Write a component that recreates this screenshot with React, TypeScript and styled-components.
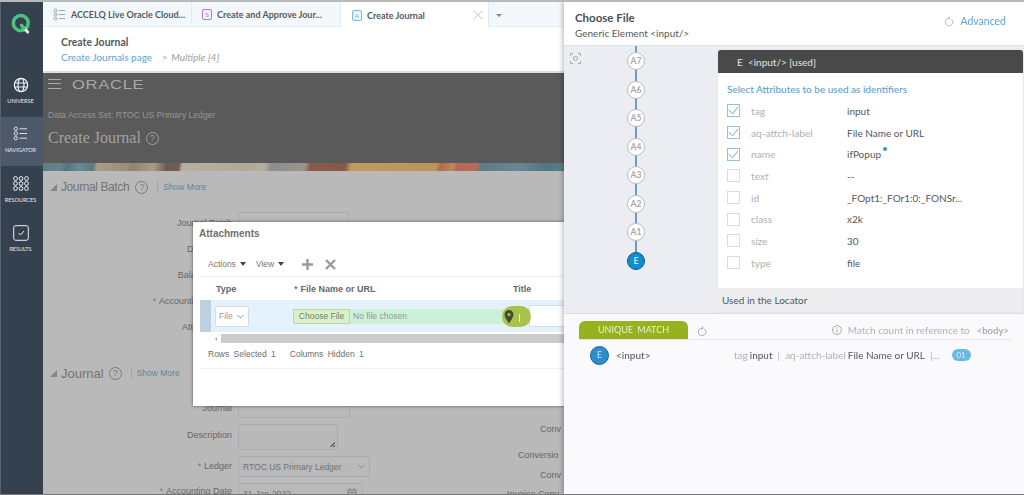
import React from "react";
import styled, { createGlobalStyle } from "styled-components";

const Global = createGlobalStyle`
  html, body { margin: 0; padding: 0; background: #fff; overflow: hidden; }
  * { box-sizing: border-box; }
  #root { width: 1024px; height: 495px; }
`;

const Shell = styled.div`
  width: 1024px; height: 495px; display: flex; overflow: hidden; position: relative;
  font-family: Lato, "Open Sans", sans-serif; border-top: 2px solid #b9b9b9; border-bottom: 1px solid #777;
  filter: blur(0.35px);
`;

/* Sidebar */
const Sidebar = styled.nav`
  width: 43px; flex: none; background: #364150; display: flex; flex-direction: column; border-left: 1px solid #59636f;
`;
const LogoSlot = styled.div`height: 71px; display: flex; justify-content: center; padding: 10px 2px 0 0;`;
const NavItem = styled.div<{ $active?: boolean; $h: number; $pad: number; $gap: number }>`
  height: ${p => p.$h}px; padding: ${p => p.$pad}px 3px 0 0; display: flex; flex-direction: column; align-items: center; gap: ${p => p.$gap}px;
  background: ${p => (p.$active ? "#4d5868" : "transparent")};
  color: #e9edf1; font-size: 5.5px; line-height: 7px; white-space: nowrap;
`;

/* Left main */
const Main = styled.div`flex: 1; min-width: 0; display: flex; flex-direction: column; position: relative; overflow: hidden;`;
const Tabs = styled.div`height: 25px; flex: none; display: flex; background: #f2f8fb; border-bottom: 1px solid #e6eef3;`;
const Tab = styled.div<{ $active?: boolean; $w: number }>`
  width: ${p => p.$w}px; height: ${p => (p.$active ? 26 : 25)}px; flex: none; display: flex; align-items: center; gap: 5px;
  padding: 0 5px 0 ${p => (p.$active ? 11 : 10)}px;
  background: ${p => (p.$active ? "#fff" : "transparent")}; color: #565a5f; font-size: 9px;
  border-right: 1px solid #e2ebf1; white-space: nowrap; position: relative;
`;
const TabLabel = styled.span`flex: 1; font-weight: 700;`;
const TabMenu = styled.div`width: 20px; display: flex; justify-content: center; padding-top: 12px; color: #888;`;
const Caret = styled.div`width: 0; height: 0; border-left: 3px solid transparent; border-right: 3px solid transparent; border-top: 3px solid #858a90;`;
const Head = styled.header`height: 46px; flex: none; background: #fff; padding: 9px 0 0 18px; border-bottom: 2px solid #d8e2ea;`;
const HeadTitle = styled.div`font-size: 10.5px; font-weight: 700; color: #54585c; line-height: 13px;`;
const Crumbs = styled.div`display: flex; align-items: center; font-size: 10px; line-height: 15px; margin-top: 1px; white-space: nowrap;`;
const CrumbLink = styled.span`color: #5ba3d5; width: 92px;`;
const CrumbSep = styled.span`color: #a5a9ad; font-size: 9px; margin-right: 4px; margin-left: 9px;`;
const CrumbMeta = styled.span`color: #9a9da2; font-style: italic; font-size: 10px;`;

/* Oracle */
const OracleTop = styled.section`
  height: 90px; flex: none; background: #5a5a5a; padding: 4px 0 0 5px; font-family: "Liberation Sans", sans-serif; color: #9a9a9a;
`;
const BrandRow = styled.div`display: flex; align-items: center; gap: 11px; height: 14px;`;
const Burger = styled.div`
  width: 13px; height: 10px; border-top: 1.5px solid #a9a9a9; border-bottom: 1.5px solid #a9a9a9; position: relative;
  &::after { content: ""; position: absolute; left: 0; right: 0; top: 2.8px; border-top: 1.5px solid #a9a9a9; }
`;
const Brand = styled.div`font-size: 13px; letter-spacing: .5px; color: #a8a8a8; transform: scaleX(1.28); transform-origin: left;`;
const AccessSet = styled.div`font-size: 8.6px; margin-top: 19px; color: #969696; line-height: 10px;`;
const PageTitle = styled.div`font-family: "Liberation Serif", serif; font-size: 16px; color: #a2a2a2; display: flex; align-items: center; gap: 5px; margin-top: 8px; line-height: 20px;`;
const Help = styled.span<{ $size: number; $c: string }>`
  width: ${p => p.$size}px; height: ${p => p.$size}px; border-radius: 50%; border: 1px solid ${p => p.$c}; color: ${p => p.$c};
  font: ${p => p.$size - 4}px/${p => p.$size - 2}px "Liberation Sans", sans-serif; text-align: center; flex: none;
`;
const Banner = styled.div`
  height: 8px; flex: none;
  background: linear-gradient(100deg,
    #5b7e88 0, #65848c 18px, #4f7480 24px, #6a8a92 36px, #587a84 50px,
    #ad9c84 54px, #9c8d78 84px, #8f8371 88px, #a89c86 110px, #6e5b55 122px, #6e5b55 134px,
    #b6b19f 138px, #aeaa98 205px, #b5b09e 218px, #8a8c8e 226px, #9a9688 258px,
    #8a5a48 264px, #85584a 298px, #c09a5e 304px, #bb9558 388px, #b5654a 392px, #bc8a58 404px,
    #b8675a 408px, #b66a5c 428px, #5a7c88 432px, #6a8790 470px, #507682 495px, #5e7f8a 521px);
`;
const Page = styled.section`
  flex: 1; background: #b9b9b9; padding: 7px 0 0 7px; font-family: "Liberation Sans", sans-serif; color: #6a6a6a;
`;
const SectionHead = styled.div<{ $mt?: number; $batch?: boolean }>`
  display: flex; align-items: center; height: 18px; margin-top: ${p => p.$mt ?? 0}px; white-space: nowrap; color: #747474;
  font-size: ${p => (p.$batch ? 12 : 13)}px; letter-spacing: ${p => (p.$batch ? -0.4 : 0)}px;
`;
const Disclosure = styled.div`width: 0; height: 0; border-left: 7px solid transparent; border-bottom: 7px solid #858585; margin-right: 4px;`;
const SectionHelp = styled.div<{ $ml: number; $mr: number }>`margin: 0 ${p => p.$mr}px 0 ${p => p.$ml}px; display: flex;`;
const ShowMore = styled.span`border-left: 1px solid #a4a4a4; padding-left: 5px; font-size: 8.5px; letter-spacing: 0; color: #5d8796; line-height: 12px;`;
const FormRow = styled.div<{ $h: number; $top?: boolean; $mt?: number }>`
  height: ${p => p.$h}px; margin-top: ${p => p.$mt ?? 0}px; display: grid; grid-template-columns: 182px 1fr; column-gap: 6px;
  align-items: ${p => (p.$top ? "start" : "center")}; font-size: 9px; line-height: 10px; color: #666;
`;
const Label = styled.div<{ $pt?: number }>`text-align: right; white-space: nowrap; padding-top: ${p => p.$pt ?? 0}px;`;
const Req = styled.span`color: #4f87ad; margin-right: 3px;`;
const Field = styled.div<{ $w: number; $h: number }>`
  width: ${p => p.$w}px; height: ${p => p.$h}px; border: 1px solid #a6acb0; border-radius: 2px; background: #b9b9b9;
  display: flex; align-items: center; justify-content: space-between; padding: 0 4px; color: #727272; font-size: 8.5px; white-space: nowrap; position: relative;
`;
const Grip = styled.div`position: absolute; right: 2px; bottom: 2px; width: 5px; height: 5px; background: linear-gradient(135deg, transparent 50%, #666 50%, #666 62%, transparent 62%, transparent 78%, #666 78%);`;
const JournalArea = styled.div`display: flex;`;
const JournalForm = styled.div`flex: 1;`;
const SideLabels = styled.div`
  width: 57px; flex: none; padding-top: 41px; font-size: 9px; line-height: 12px; color: #666; white-space: nowrap;
  display: grid; grid-template-rows: 26px 20px 19px 12px; justify-items: start;
`;
const SideLabel = styled.div<{ $off: number }>`padding-left: ${p => p.$off}px;`;

/* Dialog */
const Dialog = styled.div`
  position: absolute; left: 150px; top: 220px; width: 371px; height: 184px; background: #fff; box-shadow: 0 0 3px rgba(40,40,40,.7);
  font-family: "Liberation Sans", sans-serif; color: #6b6b6b; display: flex; flex-direction: column; padding-top: 6px;
`;
const DialogTitle = styled.div`font-size: 10px; font-weight: 700; color: #6f6f6f; padding-left: 6px; line-height: 12px;`;
const Tools = styled.div`display: flex; align-items: center; height: 20px; margin: 14px 0 2px 15px; font-size: 8.5px; color: #777; gap: 4px;`;
const ToolText = styled.span`line-height: 12px;`;
const DropCaret = styled.div<{ $mr: number }>`width: 0; height: 0; border-left: 3.5px solid transparent; border-right: 3.5px solid transparent; border-top: 4px solid #444; margin-right: ${p => p.$mr}px;`;
const ToolIcons = styled.div`display: flex; gap: 12px; align-items: center; margin-left: 14px;`;
const ColHead = styled.div`
  height: 24px; margin-left: 7px; border-top: 1px solid #eef0f2; display: grid; grid-template-columns: 16px 78px 219px 1fr; align-items: center;
  font-size: 9px; font-weight: 700; color: #666; white-space: nowrap;
`;
const ColReq = styled.span`color: #4f87ad; margin-right: 3px;`;
const DataRow = styled.div`height: 32px; margin-left: 7px; background: #e6f2fb; display: flex; align-items: center; position: relative;`;
const RowMark = styled.div`width: 11px; align-self: stretch; background: #bdd0de;`;
const TypeSelect = styled.div`
  margin-left: 4px; width: 34px; height: 21px; background: #fff; border: 1px solid #cfdfe9; border-radius: 2px; display: flex; align-items: center; gap: 4px; padding-left: 3px; font-size: 8.5px; color: #999;
`;
const FileInput = styled.div`
  margin-left: 44px; width: 212px; height: 15px; background: #cdf1d8; display: flex; align-items: center; font-size: 8.5px; color: #8b9c90; gap: 3px; white-space: nowrap;
`;
const FileButton = styled.div`
  width: 57px; height: 15px; background: #dcf0c8; border: 1px solid #b7d8a8; border-radius: 1px; text-align: center; line-height: 13px; color: #6e7f6c; flex: none;
`;
const PinBadge = styled.div`
  position: absolute; left: 302px; top: 6px; width: 29px; height: 21px; border-radius: 11px; background: #a9c24b; display: flex; align-items: center; padding-left: 2px; gap: 5px;
`;
const Cursor = styled.div`width: 1px; height: 8px; background: #f0f4dc; margin-top: 2px;`;
const TitleCell = styled.div`position: absolute; left: 329px; right: 0; top: 5px; height: 22px; background: #fff; border: 1px solid #cfdfe9; border-right: 0;`;
const ScrollRow = styled.div`height: 9px; margin: 2px 0 0 7px; display: flex; align-items: center; gap: 4px; padding-left: 15px;`;
const ScrollArrow = styled.div`width: 0; height: 0; border-top: 2px solid transparent; border-bottom: 2px solid transparent; border-right: 2px solid #aaa;`;
const ScrollThumb = styled.div`flex: 1; height: 9px; background: #cbcbcb;`;
const DialogFoot = styled.div`
  height: 26px; margin-left: 7px; padding: 0 0 4px 8px; border-bottom: 1px solid #f1f1f1; display: flex; align-items: center; gap: 14px; font-size: 8.5px; color: #6e6e6e; white-space: nowrap;
`;
const FootStat = styled.span`word-spacing: 2px;`;

/* Right panel */
const Panel = styled.aside`
  width: 460px; flex: none; display: flex; flex-direction: column; background: #fafafc; box-shadow: -2px 0 4px rgba(0,0,0,.22); position: relative; z-index: 2;
`;
const PanelHead = styled.header`
  height: 43px; flex: none; background: #fff; padding: 8px 18px 0 11px; display: flex; justify-content: space-between;
`;
const PanelTitle = styled.div`font-size: 11.5px; font-weight: 700; color: #4d5156; line-height: 15px;`;
const PanelSub = styled.div`font-size: 10px; color: #55595e; line-height: 13px; margin-top: 2px;`;
const Advanced = styled.div`display: flex; align-items: center; gap: 6px; color: #5ba3d5; font-size: 10.5px; height: 22px;`;
const Workspace = styled.div`
  height: 269px; flex: none; background: #ecedf3; border-top: 1px solid #e4e5ea; border-bottom: 1px solid #dcdde2; display: flex; position: relative;
`;
const ShotIcon = styled.div`position: absolute; left: 6px; top: 7px; display: flex;`;
const Timeline = styled.div`
  width: 154px; flex: none; display: flex; flex-direction: column; align-items: center; padding: 6px 0 0 0; position: relative;
  &::before { content: ""; position: absolute; left: 71px; top: 0; width: 2px; height: 212px; background: #6a9cc4; }
`;
const Node = styled.div<{ $end?: boolean }>`
  width: 18px; height: 18px; border-radius: 50%; position: relative; margin: 0 10px 10.55px 0; flex: none;
  background: ${p => (p.$end ? "#0e8fd0" : "#fff")}; border: 1px solid ${p => (p.$end ? "#11598e" : "#bcbcbc")};
  color: ${p => (p.$end ? "#cfeaf8" : "#a8a8a8")}; font-size: 8.5px; line-height: 16px; text-align: center; font-weight: 700;
`;
const Card = styled.div`
  width: 305px; height: 262px; margin-top: 4px; background: #fff; border-radius: 3px 3px 0 0; display: flex; flex-direction: column; box-shadow: 0 0 1px rgba(0,0,0,.25);
`;
const CardHead = styled.div`height: 23px; flex: none; background: #494949; color: #e4e4e4; font-size: 10px; display: flex; align-items: center; padding-left: 19px; border-radius: 3px 3px 0 0; white-space: nowrap;`;
const CardBody = styled.div`flex: 1; padding: 9px 0 0 9px;`;
const AttrTitle = styled.div`color: #5ba3d5; font-size: 10px; font-weight: 500; line-height: 14px; margin-bottom: 4px;`;
const AttrRow = styled.div`height: 21.7px; display: grid; grid-template-columns: 24px 96px 1fr; align-items: center; font-size: 10px; white-space: nowrap;`;
const Check = styled.div<{ $on?: boolean }>`
  width: 13px; height: 13px; border: 1px solid ${p => (p.$on ? "#8cc3e8" : "#dcdcdc")}; background: #fff; display: flex; align-items: center; justify-content: center;
`;
const AttrName = styled.div`color: #b0b0b0; font-size: 10.2px;`;
const AttrVal = styled.div`color: #55585c; display: flex; line-height: 12px;`;
const Dot = styled.span`width: 4px; height: 4px; border-radius: 50%; background: #2a9ad8; margin: -1px 0 0 2px; flex: none;`;
const CardFoot = styled.div`height: 24px; flex: none; background: #ededf0; color: #55585c; font-size: 10px; display: flex; align-items: center; padding: 0 0 1px 4px;`;
const Results = styled.div`flex: 1; padding: 7px 13px 0 15px;`;
const ResultTabs = styled.div`display: flex; align-items: flex-end; height: 19px; border-bottom: 1px solid #e6e6ea; font-size: 10px; color: #b5b5b8;`;
const Unique = styled.div`
  width: 109px; height: 18px; background: #95b31e; color: #eaf2cf; border-radius: 6px 6px 0 0; font-size: 9px; text-align: center; line-height: 18px; word-spacing: 2px; flex: none;
`;
const Refresh = styled.div`margin: 0 0 2px 9px; display: flex;`;
const MatchInfo = styled.div`margin-left: auto; display: flex; align-items: center; gap: 3px; height: 18px; font-size: 10px; color: #b2b2b6; white-space: nowrap; padding-right: 2px;`;
const BodyTag = styled.span`margin-left: 4px; font-weight: 700; font-size: 9.5px; color: #adadb1;`;
const ResultRow = styled.div`display: flex; align-items: center; height: 30px; padding-left: 11px; font-size: 10px; white-space: nowrap;`;
const ResultNode = styled.div`
  width: 19px; height: 19px; border-radius: 50%; background: #2a8fd0; border: 1px solid #1c5e92; color: #cfe8f8; font-size: 8.5px; text-align: center; line-height: 17px; flex: none;
`;
const ResultTag = styled.div`margin-left: 7px; width: 118px; color: #5b5e62; font-weight: 500;`;
const Muted = styled.span`color: #b2b2b6;`;
const Strong = styled.span`color: #55585c; margin: 0 5px 0 2px;`;
const Count = styled.div`margin-left: 12px; width: 19px; height: 12px; border-radius: 6px; background: #6cb9e8; color: #d8effb; font-size: 8px; text-align: center; line-height: 12px;`;

const Globe = () => (
  <svg width="16" height="16" viewBox="0 0 24 24" fill="none" stroke="#eef1f4" strokeWidth="1.8">
    <circle cx="12" cy="12" r="10" /><ellipse cx="12" cy="12" rx="4.5" ry="10" /><path d="M2.5 9h19M2.5 15h19" />
  </svg>
);
const ListIcon = ({ size = 15, c = "#e7ebef" }: { size?: number; c?: string }) => (
  <svg width={size} height={size} viewBox="0 0 16 16" fill="none" stroke={c} strokeWidth="1" style={{ flex: "none" }}>
    <circle cx="3" cy="3" r="1.8" /><circle cx="3" cy="8" r="1.8" /><circle cx="3" cy="13" r="1.8" />
    <path d="M7 3h8M7 8h8M7 13h8" />
  </svg>
);
const Grid9 = () => (
  <svg width="16" height="15" viewBox="0 0 16 15" fill="none" stroke="#eef1f4" strokeWidth="1">
    {[2.5, 8, 13.5].flatMap(x => [2.5, 7.5, 12.5].map(y => <circle key={x + "-" + y} cx={x} cy={y} r="1.9" />))}
  </svg>
);
const Logo = () => (
  <svg width="22" height="22" viewBox="0 0 21 23" fill="none">
    <path d="M17 15.5A7.8 7.8 0 1 1 18 10.5c0 1.8-.4 3.4-1 5" stroke="#4cc07f" strokeWidth="3.6" strokeLinecap="round" />
    <path d="M11 14l6.5 7" stroke="#e8edf0" strokeWidth="3" strokeLinecap="round" />
    <path d="M11 14l3 3.2" stroke="#4cc07f" strokeWidth="3" strokeLinecap="round" />
  </svg>
);
const LetterBox = ({ t, c, bg }: { t: string; c: string; bg: string }) => (
  <svg width="10" height="11" viewBox="0 0 10 11" style={{ flex: "none" }}>
    <rect x=".5" y=".5" width="9" height="10" rx="1.5" fill={bg} stroke={c} />
    <text x="5" y="8.2" fontSize="6.5" fontFamily="Lato, sans-serif" textAnchor="middle" fill={c}>{t}</text>
  </svg>
);
const Tick = () => (
  <svg width="11" height="9" viewBox="0 0 11 9" fill="none" stroke="#69b2e4" strokeWidth="1"><path d="M1 4l3.5 4L10 .8" /></svg>
);
const Pin = () => (
  <svg width="10" height="14" viewBox="0 0 10 14">
    <path fillRule="evenodd" d="M5 0a4.4 4.4 0 0 1 4.4 4.5C9.4 7.6 6 11.5 5 13.5 4 11.5.6 7.6.6 4.5A4.4 4.4 0 0 1 5 0zm0 3a1.6 1.6 0 1 0 0 3.2A1.6 1.6 0 0 0 5 3z" fill="#3f4a35" />
  </svg>
);
const Chevron = ({ c = "#7f8b92", w = 7 }: { c?: string; w?: number }) => (
  <svg width={w} height="5" viewBox="0 0 7 5" fill="none" stroke={c} strokeWidth="1"><path d="M.5 1l3 3 3-3" /></svg>
);
const RefreshIcon = ({ c = "#a9a9ad" }: { c?: string }) => (
  <svg width="10" height="11" viewBox="0 0 10 11" fill="none" stroke={c} strokeWidth="1"><path d="M7.5 3a3.8 3.8 0 1 1-2.2-.8M5 .4l1 1.8-1.6 1" /></svg>
);

const nodes = ["A7", "A6", "A5", "A4", "A3", "A2", "A1"];
const attrs: { n: string; v: string; on?: boolean; dot?: boolean }[] = [
  { n: "tag", v: "input", on: true },
  { n: "aq-attch-label", v: "File Name or URL", on: true },
  { n: "name", v: "ifPopup", on: true, dot: true },
  { n: "text", v: "--" },
  { n: "id", v: "_FOpt1:_FOr1:0:_FONSr..." },
  { n: "class", v: "x2k" },
  { n: "size", v: "30" },
  { n: "type", v: "file" },
];

export default function App() {
  return (
    <Shell>
      <Global />
      <Sidebar>
        <LogoSlot><Logo /></LogoSlot>
        <NavItem $h={44} $pad={4} $gap={5}><Globe />UNIVERSE</NavItem>
        <NavItem $active $h={49} $pad={9} $gap={6}><ListIcon />NAVIGATOR</NavItem>
        <NavItem $h={49} $pad={10} $gap={6}><Grid9 />RESOURCES</NavItem>
        <NavItem $h={50} $pad={10} $gap={5}>
          <svg width="16" height="16" viewBox="0 0 16 16" fill="none" stroke="#eef1f4"><rect x=".7" y=".7" width="14.6" height="14.6" rx="2" /><path d="M5.5 8l2 2 3.5-4" /></svg>
          RESULTS
        </NavItem>
      </Sidebar>

      <Main>
        <Tabs>
          <Tab $w={149}><ListIcon size={13} c="#8b949c" /><TabLabel>ACCELQ Live Oracle Cloud...</TabLabel></Tab>
          <Tab $w={149}><LetterBox t="S" c="#a97fd6" bg="#f4effa" /><TabLabel>Create and Approve Jour...</TabLabel></Tab>
          <Tab $active $w={148}>
            <LetterBox t="A" c="#79b8e6" bg="#e8f4fc" /><TabLabel>Create Journal</TabLabel>
            <svg width="10" height="10" viewBox="0 0 9 9" stroke="#cfd3d6" fill="none"><path d="M.5.5l8 8M8.5.5l-8 8" /></svg>
          </Tab>
          <TabMenu><Caret /></TabMenu>
        </Tabs>
        <Head>
          <HeadTitle>Create Journal</HeadTitle>
          <Crumbs><CrumbLink>Create Journals page</CrumbLink><CrumbSep>&gt;</CrumbSep><CrumbMeta>Multiple [4]</CrumbMeta></Crumbs>
        </Head>
        <OracleTop>
          <BrandRow><Burger /><Brand>ORACLE</Brand></BrandRow>
          <AccessSet>Data Access Set: RTOC US Primary Ledger</AccessSet>
          <PageTitle>Create Journal <Help $size={13} $c="#a2a2a2">?</Help></PageTitle>
        </OracleTop>
        <Banner />
        <Page>
          <SectionHead $batch><Disclosure />Journal Batch<SectionHelp $ml={6} $mr={9}><Help $size={13} $c="#7a7a7a">?</Help></SectionHelp><ShowMore>Show More</ShowMore></SectionHead>
          <FormRow $h={26} $mt={14}><Label>Journal Batch</Label><Field $w={111} $h={22} /></FormRow>
          <FormRow $h={26}><Label>Description</Label></FormRow>
          <FormRow $h={26}><Label>Balance Type</Label></FormRow>
          <FormRow $h={26}><Label><Req>*</Req>Accounting Period</Label></FormRow>
          <FormRow $h={25}><Label>Attachments</Label></FormRow>
          <SectionHead $mt={25}><Disclosure />Journal<SectionHelp $ml={5} $mr={9}><Help $size={13} $c="#7a7a7a">?</Help></SectionHelp><ShowMore>Show More</ShowMore></SectionHead>
          <JournalArea>
            <JournalForm>
              <FormRow $h={29} $top $mt={13}><Label $pt={8}>Journal</Label><Field $w={112} $h={23} /></FormRow>
              <FormRow $h={32} $top><Label $pt={6}>Description</Label><Field $w={100} $h={26}><Grip /></Field></FormRow>
              <FormRow $h={27} $top><Label $pt={5}><Req>*</Req>Ledger</Label><Field $w={132} $h={21}>RTOC US Primary Ledger<Chevron /></Field></FormRow>
              <FormRow $h={20} $top><Label $pt={3}><Req>*</Req>Accounting Date</Label><Field $w={125} $h={21}>31-Jan-2022
                <svg width="11" height="11" viewBox="0 0 11 11" fill="none" stroke="#808080"><rect x="1" y="2" width="8" height="8" /><path d="M1 4.5h8M3 .5v2M7 .5v2" /></svg></Field></FormRow>
            </JournalForm>
            <SideLabels>
              <SideLabel $off={33}>Conv</SideLabel>
              <SideLabel $off={11}>Conversio</SideLabel>
              <SideLabel $off={33}>Conv</SideLabel>
              <SideLabel $off={0}>Invoice Conv</SideLabel>
            </SideLabels>
          </JournalArea>
        </Page>

        <Dialog>
          <DialogTitle>Attachments</DialogTitle>
          <Tools>
            <ToolText>Actions</ToolText><DropCaret $mr={6} />
            <ToolText>View</ToolText><DropCaret $mr={0} />
            <ToolIcons>
              <svg width="11" height="11" viewBox="0 0 11 11" stroke="#9a9a9a" strokeWidth="2.4"><path d="M5.5 0v11M0 5.5h11" /></svg>
              <svg width="11" height="11" viewBox="0 0 11 11" stroke="#9a9a9a" strokeWidth="2.4"><path d="M1 1l9 9M10 1l-9 9" /></svg>
            </ToolIcons>
          </Tools>
          <ColHead>
            <span />
            <span>Type</span>
            <span><ColReq>*</ColReq>File Name or URL</span>
            <span>Title</span>
          </ColHead>
          <DataRow>
            <RowMark />
            <TypeSelect>File <Chevron c="#8b9aa3" /></TypeSelect>
            <FileInput><FileButton>Choose File</FileButton>No file chosen</FileInput>
            <TitleCell />
            <PinBadge><Pin /><Cursor /></PinBadge>
          </DataRow>
          <ScrollRow><ScrollArrow /><ScrollThumb /></ScrollRow>
          <DialogFoot><FootStat>Rows Selected 1</FootStat><FootStat>Columns Hidden 1</FootStat></DialogFoot>
        </Dialog>
      </Main>

      <Panel>
        <PanelHead>
          <div>
            <PanelTitle>Choose File</PanelTitle>
            <PanelSub>Generic Element &lt;input/&gt;</PanelSub>
          </div>
          <Advanced><RefreshIcon c="#b8b8bc" />Advanced</Advanced>
        </PanelHead>
        <Workspace>
          <ShotIcon>
            <svg width="11" height="11" viewBox="0 0 11 11" fill="none" stroke="#a8a8ac"><path d="M.5 3V.5H3M8 .5h2.5V3M10.5 8v2.5H8M3 10.5H.5V8" /><circle cx="5.5" cy="5.5" r="2" /></svg>
          </ShotIcon>
          <Timeline>
            {nodes.map(n => <Node key={n}>{n}</Node>)}
            <Node $end>E</Node>
          </Timeline>
          <Card>
            <CardHead>E&nbsp; &lt;input/&gt; [used]</CardHead>
            <CardBody>
              <AttrTitle>Select Attributes to be used as identifiers</AttrTitle>
              {attrs.map(a => (
                <AttrRow key={a.n}>
                  <Check $on={a.on}>{a.on && <Tick />}</Check>
                  <AttrName>{a.n}</AttrName>
                  <AttrVal>{a.v}{a.dot && <Dot />}</AttrVal>
                </AttrRow>
              ))}
            </CardBody>
            <CardFoot>Used in the Locator</CardFoot>
          </Card>
        </Workspace>
        <Results>
          <ResultTabs>
            <Unique>UNIQUE MATCH</Unique>
            <Refresh><RefreshIcon /></Refresh>
            <MatchInfo>
              <svg width="10" height="10" viewBox="0 0 10 10" fill="none" stroke="#a9a9ad"><circle cx="5" cy="5" r="4.4" /><path d="M5 4.2v3M5 2.4v1" /></svg>
              &nbsp;Match count in reference to <BodyTag>&lt;body&gt;</BodyTag>
            </MatchInfo>
          </ResultTabs>
          <ResultRow>
            <ResultNode>E</ResultNode>
            <ResultTag>&lt;input&gt;</ResultTag>
            <Muted>tag</Muted><Strong>input</Strong><Muted>|&nbsp; aq-attch-label</Muted><Strong>File Name or URL</Strong><Muted>|...</Muted>
            <Count>01</Count>
          </ResultRow>
        </Results>
      </Panel>
    </Shell>
  );
}
